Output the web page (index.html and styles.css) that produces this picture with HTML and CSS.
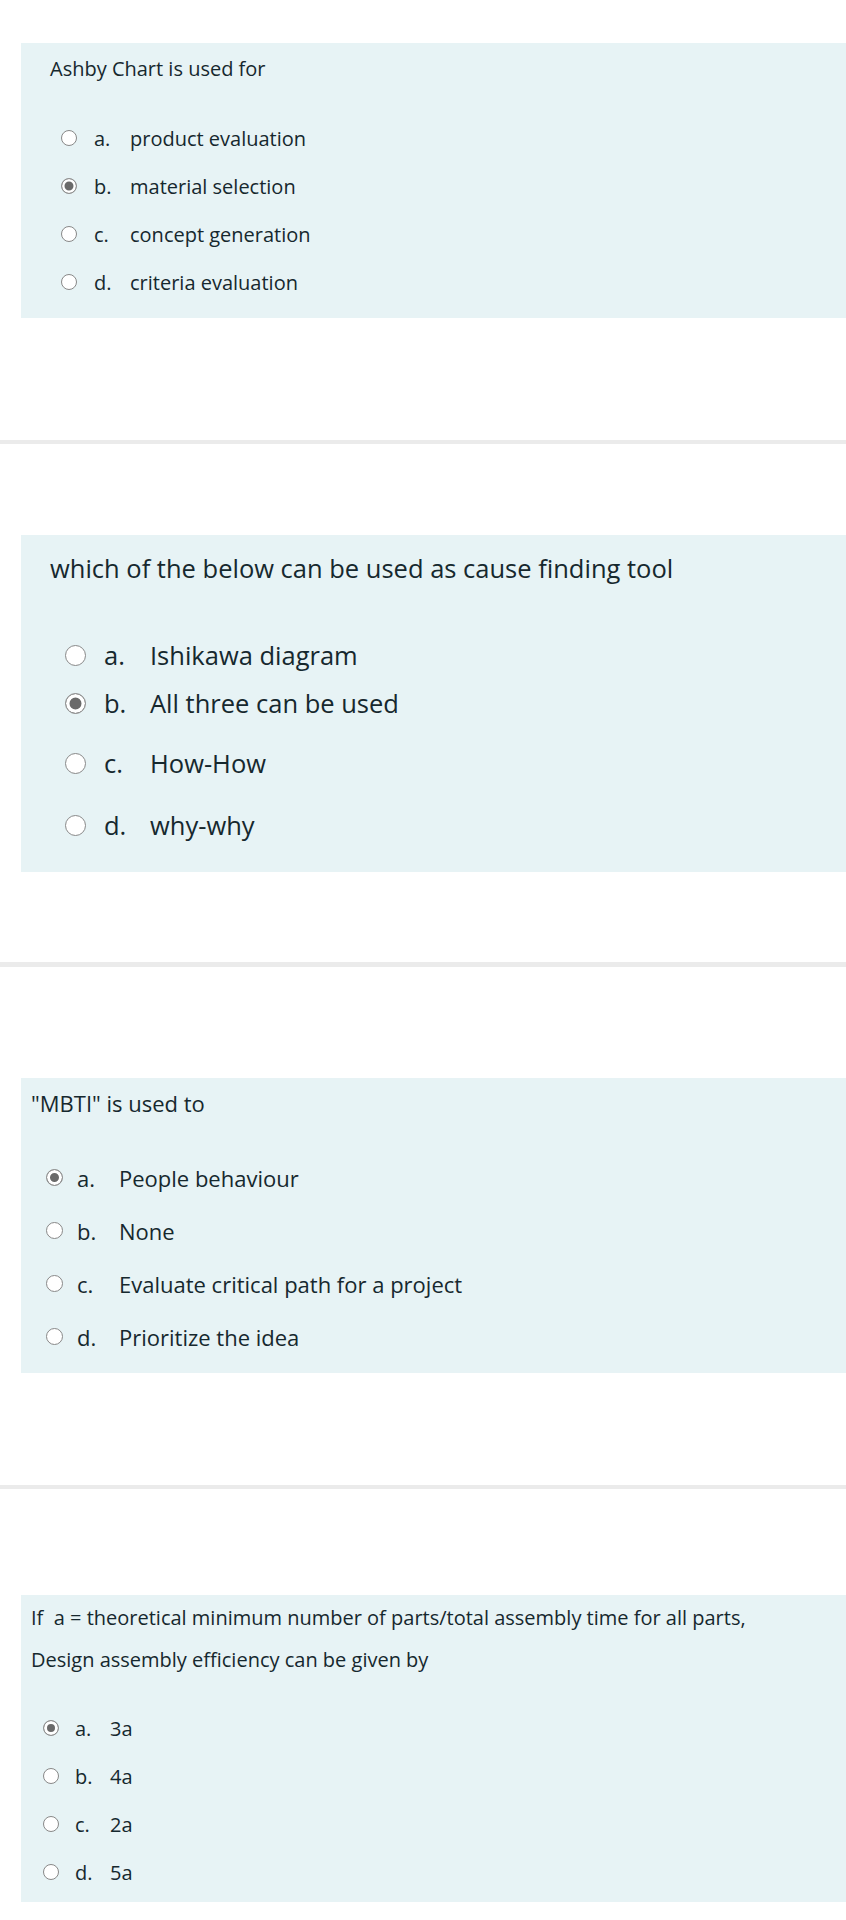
FILE: index.html
```html
<!DOCTYPE html>
<html lang="en">
<head>
<meta charset="utf-8">
<title>Quiz</title>
<link rel="stylesheet" href="styles.css">
</head>
<body>
<div class="page">
  <section class="que q1">
    <div class="formulation">
      <div class="qtext">Ashby Chart is used for</div>
      <div class="answer">
        <div class="opt"><span class="radio"></span><span class="lbl">a.</span><span class="txt">product evaluation</span></div>
        <div class="opt"><span class="radio checked"></span><span class="lbl">b.</span><span class="txt">material selection</span></div>
        <div class="opt"><span class="radio"></span><span class="lbl">c.</span><span class="txt">concept generation</span></div>
        <div class="opt"><span class="radio"></span><span class="lbl">d.</span><span class="txt">criteria evaluation</span></div>
      </div>
    </div>
  </section>
  <hr class="sep sep1">
  <section class="que q2">
    <div class="formulation">
      <div class="qtext">which of the below can be used as cause finding tool</div>
      <div class="answer">
        <div class="opt"><span class="radio"></span><span class="lbl">a.</span><span class="txt">Ishikawa diagram</span></div>
        <div class="opt"><span class="radio checked"></span><span class="lbl">b.</span><span class="txt">All three can be used</span></div>
        <div class="opt opt-c"><span class="radio"></span><span class="lbl">c.</span><span class="txt">How-How</span></div>
        <div class="opt opt-d"><span class="radio"></span><span class="lbl">d.</span><span class="txt">why-why</span></div>
      </div>
    </div>
  </section>
  <hr class="sep sep2">
  <section class="que q3">
    <div class="formulation">
      <div class="qtext">"MBTI" is used to</div>
      <div class="answer">
        <div class="opt"><span class="radio checked"></span><span class="lbl">a.</span><span class="txt">People behaviour</span></div>
        <div class="opt"><span class="radio"></span><span class="lbl">b.</span><span class="txt">None</span></div>
        <div class="opt"><span class="radio"></span><span class="lbl">c.</span><span class="txt">Evaluate critical path for a project</span></div>
        <div class="opt"><span class="radio"></span><span class="lbl">d.</span><span class="txt">Prioritize the idea</span></div>
      </div>
    </div>
  </section>
  <hr class="sep sep3">
  <section class="que q4">
    <div class="formulation">
      <div class="qtext">
        <div>If&nbsp; a = theoretical minimum number of parts/total assembly time for all parts,</div>
        <div>Design assembly efficiency can be given by</div>
      </div>
      <div class="answer">
        <div class="opt"><span class="radio checked"></span><span class="lbl">a.</span><span class="txt">3a</span></div>
        <div class="opt"><span class="radio"></span><span class="lbl">b.</span><span class="txt">4a</span></div>
        <div class="opt"><span class="radio"></span><span class="lbl">c.</span><span class="txt">2a</span></div>
        <div class="opt"><span class="radio"></span><span class="lbl">d.</span><span class="txt">5a</span></div>
      </div>
    </div>
  </section>
</div>
</body>
</html>
```

FILE: styles.css
```css
html, body {
  margin: 0;
  padding: 0;
  background: #ffffff;
}

body {
  font-family: "Open Sans", "Noto Sans", "Liberation Sans", sans-serif;
  color: #16282e;
  width: 846px;
  height: 1920px;
  overflow: hidden;
}

.page {
  display: flex;
  flex-direction: column;
}

.que {
  padding-left: 21px;
}

.formulation {
  background: #e7f3f5;
  display: flex;
  flex-direction: column;
}

.sep {
  border: 0;
  margin: 0;
  background: #ebebeb;
}

.opt {
  display: flex;
  align-items: center;
  white-space: nowrap;
}

.radio {
  flex: none;
  box-sizing: border-box;
  border-radius: 50%;
  border: 1px solid #888888;
  background: #ffffff;
}

.radio.checked {
  border-color: #939393;
  background: #6a6a6a;
}

.lbl {
  flex: none;
}

/* ---------- Question 1 ---------- */
.q1 {
  padding-top: 43px;
}

.q1 .formulation {
  height: 275px;
  box-sizing: border-box;
  padding: 12px 0 12px 29px;
  font-size: 20px;
}

.q1 .qtext {
  line-height: 28px;
  margin-bottom: 31px;
}

.q1 .opt {
  height: 48px;
  padding-left: 11px;
}

.q1 .radio {
  width: 16px;
  height: 16px;
  margin-right: 17px;
}

.q1 .radio.checked {
  box-shadow: inset 0 0 0 2.5px #ffffff;
}

.q1 .lbl {
  width: 36px;
}

.sep1 {
  height: 4px;
  margin-top: 122px;
}

/* ---------- Question 2 ---------- */
.q2 {
  padding-top: 91px;
}

.q2 .formulation {
  height: 337px;
  box-sizing: border-box;
  padding: 16px 0 0 29px;
  font-size: 25.5px;
}

.q2 .qtext {
  line-height: 34px;
  margin-bottom: 46px;
}

.q2 .opt {
  height: 48px;
  padding-left: 15px;
}

.q2 .opt-c {
  margin-top: 12px;
}

.q2 .opt-d {
  margin-top: 14px;
}

.q2 .radio {
  width: 21px;
  height: 21px;
  margin-right: 18px;
}

.q2 .radio.checked {
  box-shadow: inset 0 0 0 3.5px #ffffff;
}

.q2 .lbl {
  width: 46px;
}

.sep2 {
  height: 5px;
  margin-top: 90px;
}

/* ---------- Question 3 ---------- */
.q3 {
  padding-top: 111px;
}

.q3 .formulation {
  height: 295px;
  box-sizing: border-box;
  padding: 10px 0 0 10px;
  font-size: 22px;
}

.q3 .qtext {
  line-height: 30px;
  margin-bottom: 33px;
}

.q3 .opt {
  height: 53px;
  padding-left: 15px;
}

.q3 .radio {
  width: 17px;
  height: 17px;
  margin-right: 14px;
}

.q3 .radio.checked {
  box-shadow: inset 0 0 0 3px #ffffff;
}

.q3 .lbl {
  width: 42px;
}

.sep3 {
  height: 4px;
  margin-top: 112px;
}

/* ---------- Question 4 ---------- */
.q4 {
  padding-top: 106px;
}

.q4 .formulation {
  height: 307px;
  box-sizing: border-box;
  padding: 2px 0 0 10px;
  font-size: 20px;
}

.q4 .qtext {
  line-height: 42px;
  margin-bottom: 23px;
}

.q4 .opt {
  height: 48px;
  padding-left: 12px;
}

.q4 .radio {
  width: 16px;
  height: 16px;
  margin-right: 16px;
}

.q4 .radio.checked {
  box-shadow: inset 0 0 0 3px #ffffff;
}

.q4 .lbl {
  width: 35px;
}
```
